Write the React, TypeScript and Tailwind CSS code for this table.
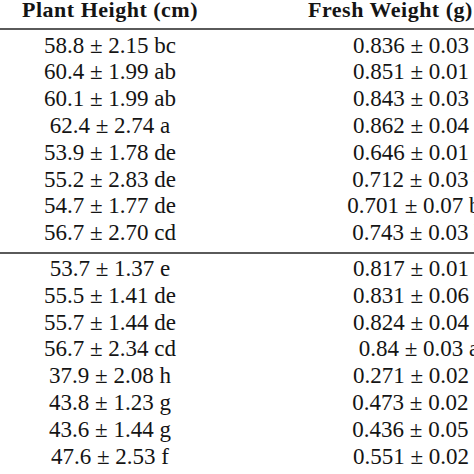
const GROUP_A: [string, string][] = [
  ["58.8 ± 2.15 bc", "0.836 ± 0.03 a"],
  ["60.4 ± 1.99 ab", "0.851 ± 0.01 a"],
  ["60.1 ± 1.99 ab", "0.843 ± 0.03 a"],
  ["62.4 ± 2.74 a", "0.862 ± 0.04 a"],
  ["53.9 ± 1.78 de", "0.646 ± 0.01 c"],
  ["55.2 ± 2.83 de", "0.712 ± 0.03 b"],
  ["54.7 ± 1.77 de", "0.701 ± 0.07 bc"],
  ["56.7 ± 2.70 cd", "0.743 ± 0.03 b"],
];

const GROUP_B: [string, string][] = [
  ["53.7 ± 1.37 e", "0.817 ± 0.01 a"],
  ["55.5 ± 1.41 de", "0.831 ± 0.06 a"],
  ["55.7 ± 1.44 de", "0.824 ± 0.04 a"],
  ["56.7 ± 2.34 cd", "0.84 ± 0.03 a"],
  ["37.9 ± 2.08 h", "0.271 ± 0.02 e"],
  ["43.8 ± 1.23 g", "0.473 ± 0.02 d"],
  ["43.6 ± 1.44 g", "0.436 ± 0.05 d"],
  ["47.6 ± 2.53 f", "0.551 ± 0.02 c"],
];

function Row({ cells }: { cells: [string, string] }) {
  return (
    <div className="grid h-[26.8px] grid-cols-[220px_80px_238px] text-[23px] leading-[26.8px] whitespace-nowrap">
      <div className="text-center">{cells[0]}</div>
      <div />
      <div className="text-center">{cells[1]}</div>
    </div>
  );
}

export default function App() {
  return (
    <div
      className="h-[474px] w-[474px] overflow-hidden bg-white text-[#141414]"
      style={{ fontFamily: '"Liberation Serif", "Times New Roman", serif' }}
    >
      <div className="w-[538px]">
        {/* Header */}
        <div className="grid h-[30px] grid-cols-[220px_80px_238px] border-b-2 border-[#5a5a5a] text-[22px] leading-[26px] font-bold tracking-[0.5px] whitespace-nowrap">
          <div className="-mt-[3px] text-center">Plant Height (cm)</div>
          <div />
          <div className="-mt-[3px] pl-2">Fresh Weight (g)</div>
        </div>

        {/* First group */}
        <div className="pt-[2.6px] pb-[5px]">
          {GROUP_A.map((r) => (
            <Row key={r[0]} cells={r} />
          ))}
        </div>

        {/* Second group */}
        <div className="border-t-2 border-[#5a5a5a] pt-[2px]">
          {GROUP_B.map((r) => (
            <Row key={r[0] + r[1]} cells={r} />
          ))}
        </div>
      </div>
    </div>
  );
}
